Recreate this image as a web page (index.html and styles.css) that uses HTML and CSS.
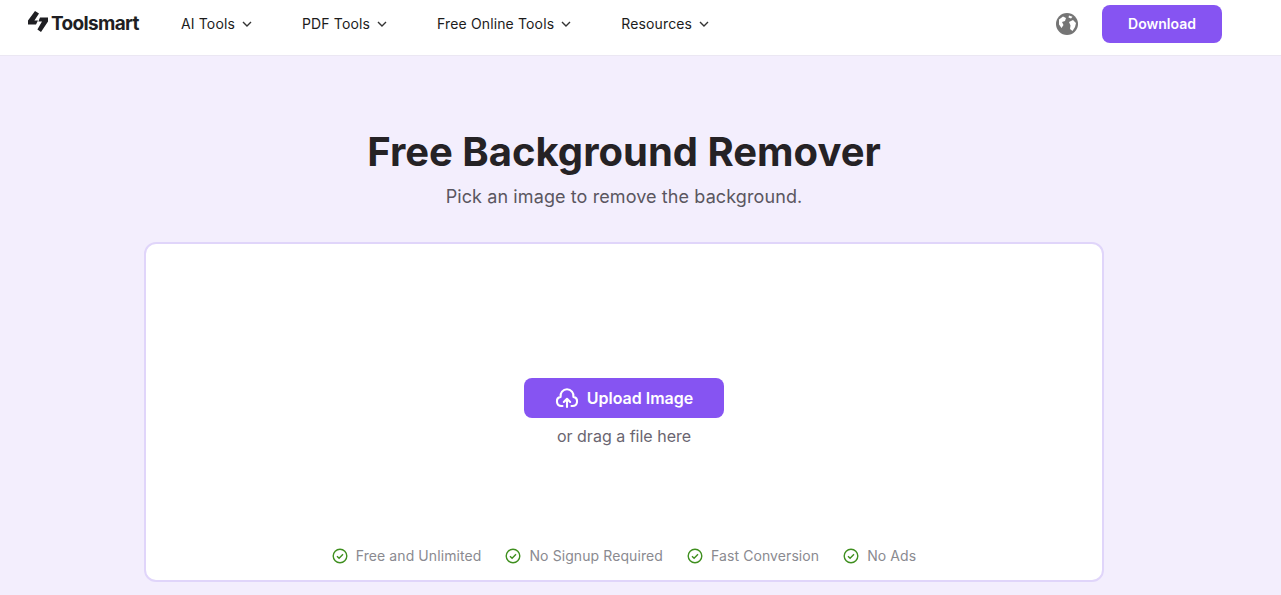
FILE: index.html
```html
<!DOCTYPE html>
<html lang="en">
<head>
  <meta charset="UTF-8" />
  <title>Free Background Remover</title>
  <link rel="stylesheet" href="styles.css">
</head>
<body>
  <header class="topbar">
    <a class="logo" href="#">
      <svg class="logo-mark" viewBox="0 0 20 21" width="20" height="21">
        <path d="M7 0 L11 2.6 L6.4 9.6 L10 9.6 L8 13.4 L0 13.4 L0 9.6 Z" fill="#1f1f23"/>
        <path d="M12 6.6 L20 6.6 L20 10.4 L13 21 L9.4 18.6 L14 10.6 L10.4 10.6 Z" fill="#1f1f23"/>
      </svg>
      <span>Toolsmart</span>
    </a>
    <nav class="menu">
      <a href="#">AI Tools <svg class="chev" viewBox="0 0 10 6"><path d="M1 1l4 4 4-4"/></svg></a>
      <a href="#">PDF Tools <svg class="chev" viewBox="0 0 10 6"><path d="M1 1l4 4 4-4"/></svg></a>
      <a href="#">Free Online Tools <svg class="chev" viewBox="0 0 10 6"><path d="M1 1l4 4 4-4"/></svg></a>
      <a href="#">Resources <svg class="chev" viewBox="0 0 10 6"><path d="M1 1l4 4 4-4"/></svg></a>
    </nav>
    <svg class="globe" viewBox="0 0 24 24" width="24" height="24">
      <circle cx="12" cy="12" r="11" fill="#757575"/>
      <path d="M4 7.5 L8 4.5 L11 6 L10 9 L7 10 L8.5 13 L6.5 16 L4 12.5 Z" fill="#fff"/>
      <path d="M14 10 L18 8 L21 11 L20 15 L17.5 19 L15 17 L15.5 13.5 Z" fill="#fff"/>
      <path d="M14 3.5 L17.5 4.8 L16 6.5 L13.5 5.5 Z" fill="#fff"/>
    </svg>
    <a class="btn-download" href="#">Download</a>
  </header>

  <main class="page">
    <h1>Free Background Remover</h1>
    <p class="sub">Pick an image to remove the background.</p>

    <section class="dropbox">
      <div class="drop-center">
        <button class="btn-upload">
          <svg viewBox="0 0 24 24" width="24" height="24" fill="none" stroke="#fff" stroke-width="2.1" stroke-linecap="round" stroke-linejoin="round">
            <path d="M7.5 20 H6.5 A4.6 4.6 0 0 1 5.6 10.9 A6.5 6.5 0 1 1 18.4 10.9 A4.6 4.6 0 0 1 17.5 20 H16.5"/>
            <path d="M12 21 V13 M8.8 16 L12 12.8 L15.2 16"/>
          </svg>
          Upload Image
        </button>
        <p class="drag">or drag a file here</p>
      </div>
      <ul class="perks">
        <li><svg class="tick" viewBox="0 0 16 16"><circle cx="8" cy="8" r="6.8"/><path d="M5 8.2l2.1 2.1L11 6.2"/></svg>Free and Unlimited</li>
        <li><svg class="tick" viewBox="0 0 16 16"><circle cx="8" cy="8" r="6.8"/><path d="M5 8.2l2.1 2.1L11 6.2"/></svg>No Signup Required</li>
        <li><svg class="tick" viewBox="0 0 16 16"><circle cx="8" cy="8" r="6.8"/><path d="M5 8.2l2.1 2.1L11 6.2"/></svg>Fast Conversion</li>
        <li><svg class="tick" viewBox="0 0 16 16"><circle cx="8" cy="8" r="6.8"/><path d="M5 8.2l2.1 2.1L11 6.2"/></svg>No Ads</li>
      </ul>
    </section>
  </main>
</body>
</html>
```

FILE: styles.css
```css
html, body {
  margin: 0;
  height: 595px;
  overflow: hidden;
}
body {
  font-family: Inter, "Liberation Sans", sans-serif;
  background: #f3eefd;
  color: #222;
}
a {
  text-decoration: none;
  color: inherit;
}
.topbar {
  display: flex;
  align-items: center;
  box-sizing: border-box;
  height: 56px;
  padding: 0 59px 8px 28px;
  background: #fff;
  border-bottom: 1px solid #ebe7f3;
}
.logo {
  display: flex;
  align-items: center;
  gap: 3px;
  width: 153px;
  font-size: 19px;
  font-weight: 700;
  letter-spacing: -0.65px;
  color: #1f1f23;
}
.logo-mark {
  margin-top: -4px;
}
.menu {
  display: flex;
  flex: 1;
  gap: 50px;
  font-size: 14px;
  font-weight: 400;
  letter-spacing: 0.14px;
  color: #1c1c1c;
}
.menu a {
  display: flex;
  align-items: center;
  gap: 7px;
  white-space: nowrap;
}
.chev {
  width: 10px;
  height: 6px;
  fill: none;
  stroke: #333;
  stroke-width: 1.4;
}
.globe {
  margin-right: 23px;
}
.btn-download {
  display: flex;
  align-items: center;
  justify-content: center;
  width: 120px;
  height: 38px;
  border-radius: 8px;
  background: #8654f2;
  color: #fff;
  font-size: 14px;
  font-weight: 600;
}
.page {
  display: flex;
  flex-direction: column;
  align-items: center;
  padding-right: 33px;
}
h1 {
  margin: 71px 0 0;
  font-size: 40px;
  line-height: 50px;
  font-weight: 700;
  color: #252225;
}
.sub {
  margin: 8px 0 0;
  font-size: 18px;
  line-height: 24px;
  letter-spacing: 0.1px;
  color: #5a5660;
}
.dropbox {
  display: flex;
  flex-direction: column;
  box-sizing: border-box;
  width: 960px;
  height: 340px;
  margin-top: 33px;
  background: #fff;
  border: 2px solid #e0d5fa;
  border-radius: 12px;
}
.drop-center {
  display: flex;
  flex-direction: column;
  align-items: center;
  padding-top: 134px;
  flex: 1;
}
.btn-upload {
  display: flex;
  align-items: center;
  justify-content: center;
  gap: 8px;
  width: 200px;
  height: 40px;
  border: 0;
  border-radius: 8px;
  background: #8654f2;
  color: #fff;
  font-family: inherit;
  font-size: 16px;
  font-weight: 600;
}
.drag {
  margin: 8px 0 0;
  font-size: 16px;
  line-height: 20px;
  color: #6a6570;
}
.perks {
  display: flex;
  justify-content: center;
  gap: 24px;
  list-style: none;
  margin: 0;
  padding: 0 0 14px;
  font-size: 14px;
  line-height: 20px;
  letter-spacing: 0.09px;
  color: #8a8a90;
}
.perks li {
  display: flex;
  align-items: center;
  gap: 8px;
}
.tick {
  width: 16px;
  height: 16px;
  fill: none;
  stroke: #3f8f1f;
  stroke-width: 1.4;
}
```
